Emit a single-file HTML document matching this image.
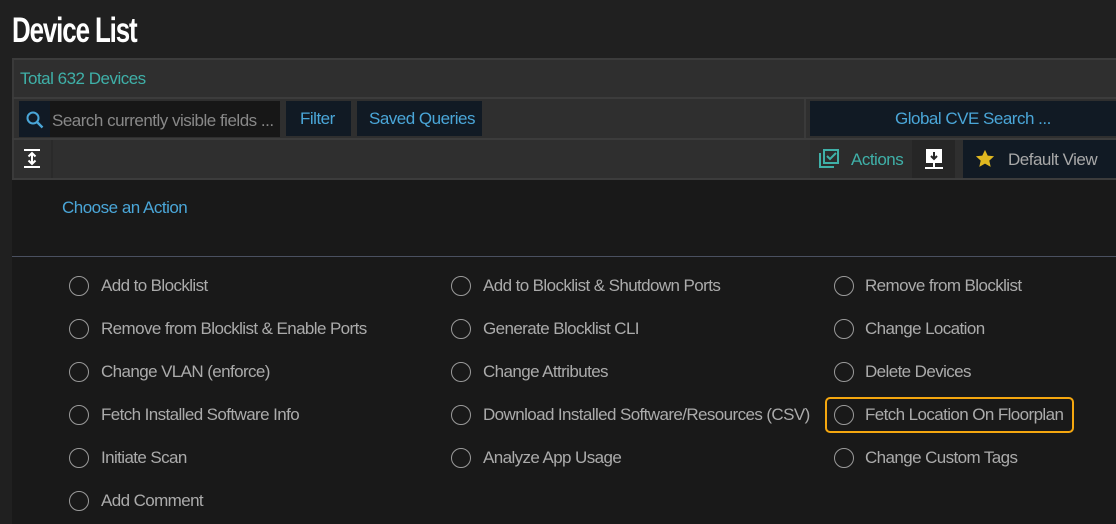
<!DOCTYPE html>
<html><head><meta charset="utf-8"><style>
*{margin:0;padding:0;box-sizing:border-box}
body{width:1116px;height:524px;background:#202020;font-family:"Liberation Sans",sans-serif;overflow:hidden;position:relative}
.a{position:absolute}
.t{font-size:17px;letter-spacing:-0.5px;white-space:nowrap}
.r{position:absolute;width:20px;height:20px;border:1.5px solid #9a9a9a;border-radius:50%}
.l{position:absolute;color:#ababab;font-size:17px;letter-spacing:-0.6px;white-space:nowrap}
</style></head><body>
<div class="a" style="left:12px;top:11px;color:#fff;font-size:35px;font-weight:bold;letter-spacing:-1.5px;transform:scaleX(0.74);transform-origin:left">Device List</div>
<div class="a" style="left:12px;top:58px;width:1104px;height:122px;background:#2f2f2f;border-top:2px solid #3c3c3c;border-left:2px solid #3a3a3a"></div>
<div class="a t" style="left:20px;top:69px;color:#3fb0a8">Total 632 Devices</div>
<div class="a" style="left:12px;top:97px;width:1104px;height:2px;background:#3c3c3c"></div>
<div class="a" style="left:19px;top:101px;width:31px;height:36px;background:#111a25"></div>
<svg class="a" style="left:25px;top:110px" width="20" height="20" viewBox="0 0 20 20"><circle cx="8" cy="8" r="5.5" fill="none" stroke="#4aa6d8" stroke-width="2"/><path d="M12 12l5.5 5.5" stroke="#4aa6d8" stroke-width="2.4"/></svg>
<div class="a" style="left:50px;top:101px;width:230px;height:36px;background:#171717"></div>
<div class="a t" style="left:52px;top:111px;color:#888">Search currently visible fields ...</div>
<div class="a" style="left:286px;top:101px;width:65px;height:35px;background:#111a24"></div>
<div class="a t" style="left:300px;top:109px;color:#4aa6d8">Filter</div>
<div class="a" style="left:357px;top:101px;width:125px;height:35px;background:#111a24"></div>
<div class="a t" style="left:369px;top:109px;color:#4aa6d8">Saved Queries</div>
<div class="a" style="left:804px;top:99px;width:2px;height:40px;background:#3a3a3a"></div>
<div class="a" style="left:810px;top:101px;width:306px;height:35px;background:#111a24"></div>
<div class="a t" style="left:895px;top:109px;color:#4aa6d8">Global CVE Search ...</div>
<div class="a" style="left:12px;top:138px;width:1104px;height:2px;background:#3c3c3c"></div>
<div class="a" style="left:51px;top:140px;width:2px;height:39px;background:#2a2a2a"></div>
<svg class="a" style="left:23px;top:148px" width="18" height="22" viewBox="0 0 18 22"><rect x="1" y="1" width="16" height="2" fill="#fff"/><rect x="1" y="18" width="16" height="2" fill="#fff"/><path d="M9 5v11M5.5 8.5L9 5l3.5 3.5M5.5 12.5L9 16l3.5-3.5" stroke="#fff" stroke-width="2" fill="none"/></svg>
<div class="a" style="left:810px;top:140px;width:102px;height:39px;background:#2c2c2c"></div>
<svg class="a" style="left:818px;top:149px" width="22" height="20" viewBox="0 0 22 20"><path d="M2 4v14h14" stroke="#3fb0a8" stroke-width="2" fill="none"/><rect x="6" y="1" width="14" height="13" stroke="#3fb0a8" stroke-width="2" fill="none"/><path d="M9 7l3 3 6-6" stroke="#3fb0a8" stroke-width="2" fill="none"/></svg>
<div class="a t" style="left:851px;top:150px;color:#3fb0a8">Actions</div>
<div class="a" style="left:912px;top:140px;width:43px;height:39px;background:#262626"></div>
<svg class="a" style="left:923px;top:149px" width="22" height="22" viewBox="0 0 22 22"><rect x="3" y="0" width="16" height="14" fill="#fff"/><path d="M11 3v7M8 7l3 3 3-3" stroke="#262626" stroke-width="2" fill="none"/><path d="M11 14v4M2 19h18" stroke="#fff" stroke-width="2"/></svg>
<div class="a" style="left:963px;top:140px;width:153px;height:39px;background:#111a24"></div>
<svg class="a" style="left:975px;top:149px" width="20" height="19" viewBox="0 0 24 23"><path d="M12 1l3.3 7 7.7.8-5.8 5.2 1.7 7.6L12 17.7 5.1 21.6l1.7-7.6L1 8.8 8.7 8z" fill="#e0b820"/></svg>
<div class="a t" style="left:1008px;top:150px;color:#a8a8a8">Default View</div>
<div class="a" style="left:12px;top:178px;width:1104px;height:2px;background:#3c3c3c"></div>
<div class="a" style="left:12px;top:180px;width:1104px;height:344px;background:#191919"></div>
<div class="a t" style="left:62px;top:198px;color:#4aa6d8">Choose an Action</div>
<div class="a" style="left:12px;top:256px;width:1104px;height:1px;background:#4a5060"></div>
<div class="a" style="left:825px;top:397px;width:249px;height:36px;border:2px solid #f5a70f;border-radius:5px"></div>
<div class="r" style="left:69px;top:276px"></div><div class="l" style="left:101px;top:276px">Add to Blocklist</div>
<div class="r" style="left:451px;top:276px"></div><div class="l" style="left:483px;top:276px">Add to Blocklist &amp; Shutdown Ports</div>
<div class="r" style="left:834px;top:276px"></div><div class="l" style="left:865px;top:276px">Remove from Blocklist</div>
<div class="r" style="left:69px;top:319px"></div><div class="l" style="left:101px;top:319px">Remove from Blocklist &amp; Enable Ports</div>
<div class="r" style="left:451px;top:319px"></div><div class="l" style="left:483px;top:319px">Generate Blocklist CLI</div>
<div class="r" style="left:834px;top:319px"></div><div class="l" style="left:865px;top:319px">Change Location</div>
<div class="r" style="left:69px;top:362px"></div><div class="l" style="left:101px;top:362px">Change VLAN (enforce)</div>
<div class="r" style="left:451px;top:362px"></div><div class="l" style="left:483px;top:362px">Change Attributes</div>
<div class="r" style="left:834px;top:362px"></div><div class="l" style="left:865px;top:362px">Delete Devices</div>
<div class="r" style="left:69px;top:405px"></div><div class="l" style="left:101px;top:405px">Fetch Installed Software Info</div>
<div class="r" style="left:451px;top:405px"></div><div class="l" style="left:483px;top:405px">Download Installed Software/Resources (CSV)</div>
<div class="r" style="left:834px;top:405px"></div><div class="l" style="left:865px;top:405px">Fetch Location On Floorplan</div>
<div class="r" style="left:69px;top:448px"></div><div class="l" style="left:101px;top:448px">Initiate Scan</div>
<div class="r" style="left:451px;top:448px"></div><div class="l" style="left:483px;top:448px">Analyze App Usage</div>
<div class="r" style="left:834px;top:448px"></div><div class="l" style="left:865px;top:448px">Change Custom Tags</div>
<div class="r" style="left:69px;top:491px"></div><div class="l" style="left:101px;top:491px">Add Comment</div>
</body></html>
